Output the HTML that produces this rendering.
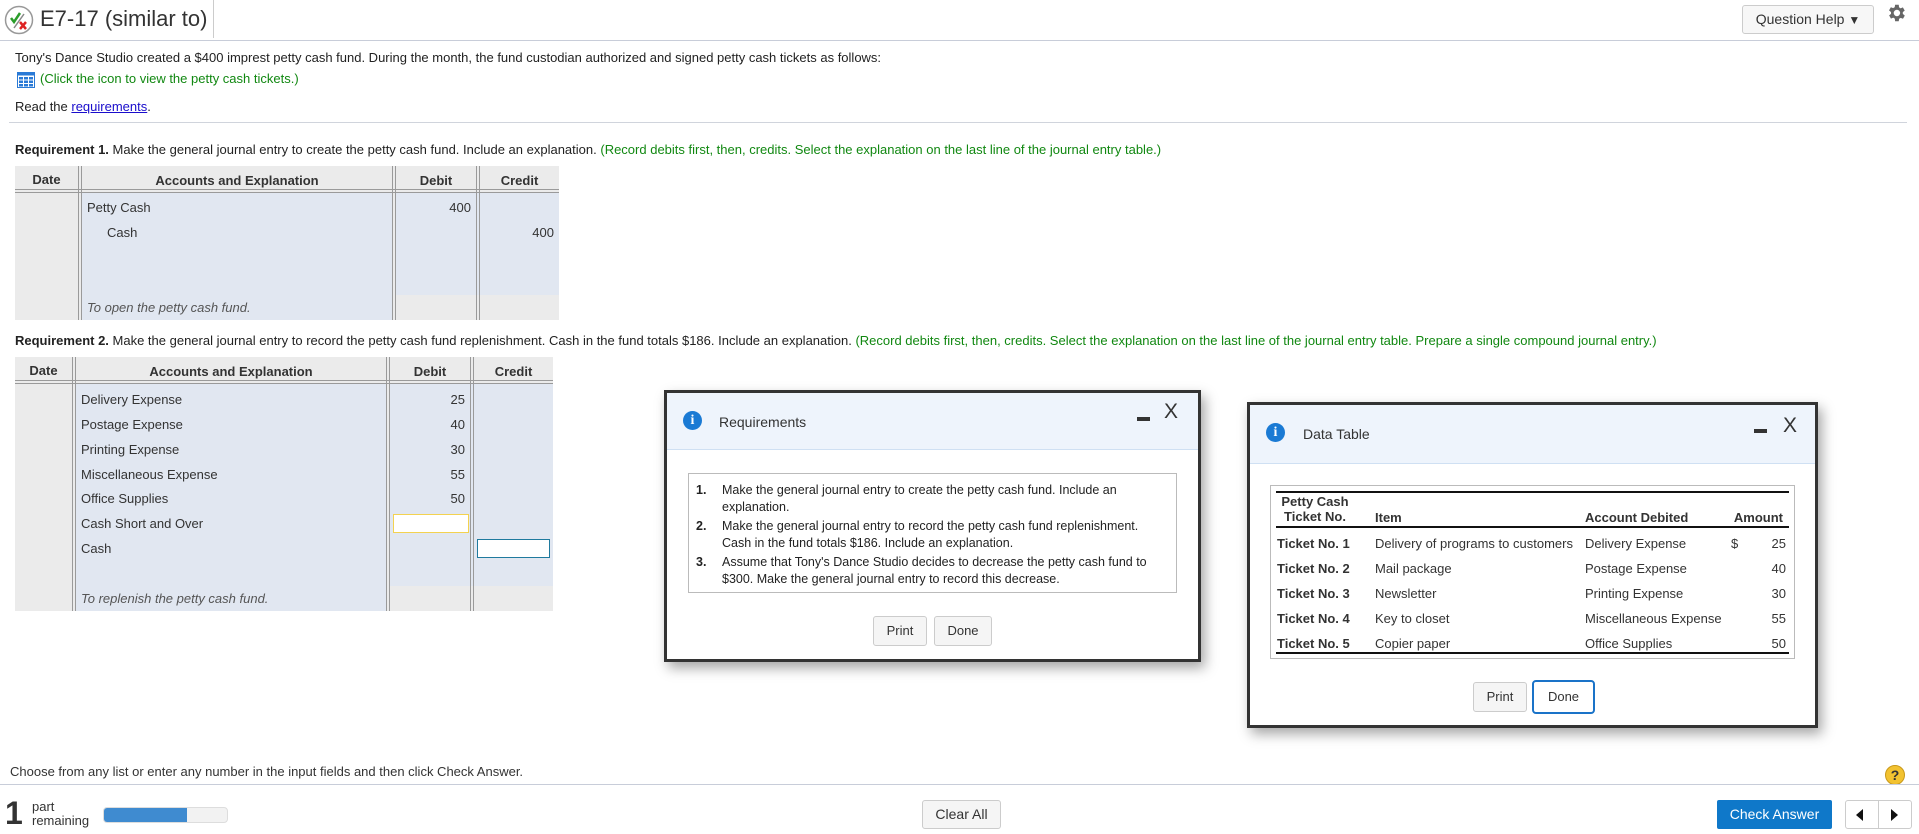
<!DOCTYPE html>
<html><head><meta charset="utf-8">
<style>
*{box-sizing:border-box;margin:0;padding:0}
body{width:1919px;height:834px;position:relative;background:#fff;font-family:"Liberation Sans",Arial,sans-serif;font-size:13px;color:#222;overflow:hidden}
.a{position:absolute;white-space:nowrap}
.g{color:#118811}
.hd{position:absolute;background:#ebebeb}
.vl{position:absolute;width:4px;border-left:1px solid #9a9a9a;border-right:1px solid #9a9a9a}
.hl{position:absolute;height:4px;border-top:1px solid #9a9a9a;border-bottom:1px solid #9a9a9a}
.th{position:absolute;font-weight:bold;color:#333;text-align:center;font-size:13px}
.td{position:absolute;color:#333;font-size:13px;white-space:nowrap}
.btn{position:absolute;border:1px solid #ccc;background:#f5f5f5;border-radius:3px;text-align:center;color:#333;font-size:13px}
.modal{position:absolute;background:#fff;border:3px solid #333;box-shadow:4px 6px 12px rgba(0,0,0,.35)}
.mh{position:absolute;left:0;top:0;right:0;background:#eef4fc;border-bottom:1px solid #cfe0f3}
.info{position:absolute;width:19px;height:19px;border-radius:50%;background:#1a7ad4;color:#fff;font:bold 14px "Liberation Serif",serif;text-align:center;line-height:19px}
</style></head><body>

<svg class="a" style="left:4px;top:5px" width="30" height="30" viewBox="0 0 30 30"><circle cx="15" cy="15" r="13.5" fill="#fff" stroke="#999" stroke-width="1.5"/><path d="M7 13l3 4 6-9" stroke="#2a9d2a" stroke-width="2.5" fill="none"/><path d="M10 23l10-14" stroke="#888" stroke-width="1.5"/><path d="M16 17l6 7M22 17l-6 7" stroke="#d22" stroke-width="2.5"/></svg>
<div class="a" style="left:40px;top:6px;font-size:22px;color:#333">E7-17 (similar to)</div>
<div class="a" style="left:213px;top:0;width:1px;height:38px;background:#ccc"></div>
<div class="a" style="left:0;top:40px;width:1919px;height:1px;background:#c8cdd9"></div>
<div class="btn" style="left:1742px;top:5px;width:132px;height:29px;line-height:27px;font-size:14px;background:#f7f7f7">Question Help <span style="font-size:12px">&#9660;</span></div>
<svg class="a" style="left:1885px;top:2px" width="22" height="22" viewBox="0 0 24 24"><path fill="#666" d="M19.4 13a7.5 7.5 0 000-2l2.1-1.6-2-3.5-2.5 1a7.6 7.6 0 00-1.700-1L15 3h-4l-.4 2.7a7.6 7.6 0 00-1.7 1l-2.5-1-2 3.5L6.6 11a7.5 7.5 0 000 2l-2.1 1.6 2 3.5 2.5-1a7.6 7.6 0 001.7 1L11 21h4l.4-2.7a7.6 7.6 0 001.7-1l2.5 1 2-3.5zM13 15.5a3.5 3.5 0 110-7 3.5 3.5 0 010 7z"/></svg>

<div class="a" style="left:15px;top:50px">Tony's Dance Studio created a $400 imprest petty cash fund. During the month, the fund custodian authorized and signed petty cash tickets as follows:</div>
<svg class="a" style="left:17px;top:72px" width="18" height="16" viewBox="0 0 18 16"><rect x="0.5" y="0.5" width="17" height="15" fill="#fff" stroke="#2a7ad6"/><rect x="0.5" y="0.5" width="17" height="3" fill="#2a7ad6"/><g fill="#2a7ad6"><rect x="2" y="5" width="4" height="2.5"/><rect x="7" y="5" width="4" height="2.5"/><rect x="12" y="5" width="4" height="2.5"/><rect x="2" y="8.5" width="4" height="2.5"/><rect x="7" y="8.5" width="4" height="2.5"/><rect x="12" y="8.5" width="4" height="2.5"/><rect x="2" y="12" width="4" height="2.5"/><rect x="7" y="12" width="4" height="2.5"/><rect x="12" y="12" width="4" height="2.5"/></g></svg>
<div class="a g" style="left:40px;top:71px">(Click the icon to view the petty cash tickets.)</div>
<div class="a" style="left:15px;top:99px">Read the <span style="color:#1a0dcc;text-decoration:underline">requirements</span>.</div>
<div class="a" style="left:9px;top:122px;width:1898px;height:1px;background:#d0d4dc"></div>

<div class="a" style="left:15px;top:142px"><b>Requirement 1.</b> Make the general journal entry to create the petty cash fund. Include an explanation. <span class="g">(Record debits first, then, credits. Select the explanation on the last line of the journal entry table.)</span></div>

<div class="hd" style="left:15px;top:166px;width:544px;height:154px"></div>
<div class="a" style="left:81px;top:193px;width:312px;height:127px;background:#e1e7f1"></div>
<div class="a" style="left:395px;top:193px;width:164px;height:102px;background:#e1e7f1"></div>
<div class="hl" style="left:15px;top:189px;width:544px"></div>
<div class="vl" style="left:78px;top:166px;height:154px"></div>
<div class="vl" style="left:392px;top:166px;height:154px"></div>
<div class="vl" style="left:476px;top:166px;height:154px"></div>
<div class="th" style="left:15px;top:172px;width:63px">Date</div>
<div class="th" style="left:82px;top:173px;width:310px">Accounts and Explanation</div>
<div class="th" style="left:396px;top:173px;width:80px">Debit</div>
<div class="th" style="left:480px;top:173px;width:79px">Credit</div>
<div class="td" style="left:87px;top:200px">Petty Cash</div>
<div class="td" style="left:107px;top:225px">Cash</div>
<div class="td" style="left:396px;top:200px;width:75px;text-align:right">400</div>
<div class="td" style="left:480px;top:225px;width:74px;text-align:right">400</div>
<div class="td" style="left:87px;top:300px;font-style:italic;color:#555">To open the petty cash fund.</div>

<div class="a" style="left:15px;top:333px"><b>Requirement 2.</b> Make the general journal entry to record the petty cash fund replenishment. Cash in the fund totals $186. Include an explanation. <span class="g">(Record debits first, then, credits. Select the explanation on the last line of the journal entry table. Prepare a single compound journal entry.)</span></div>

<div class="hd" style="left:15px;top:357px;width:538px;height:254px"></div>
<div class="a" style="left:75px;top:384px;width:312px;height:227px;background:#e1e7f1"></div>
<div class="a" style="left:389px;top:384px;width:164px;height:202px;background:#e1e7f1"></div>
<div class="hl" style="left:15px;top:380px;width:538px"></div>
<div class="vl" style="left:72px;top:357px;height:254px"></div>
<div class="vl" style="left:386px;top:357px;height:254px"></div>
<div class="vl" style="left:470px;top:357px;height:254px"></div>
<div class="th" style="left:15px;top:363px;width:57px">Date</div>
<div class="th" style="left:76px;top:364px;width:310px">Accounts and Explanation</div>
<div class="th" style="left:390px;top:364px;width:80px">Debit</div>
<div class="th" style="left:474px;top:364px;width:79px">Credit</div>
<div class="td" style="left:81px;top:392px">Delivery Expense</div>
<div class="td" style="left:81px;top:417px">Postage Expense</div>
<div class="td" style="left:81px;top:442px">Printing Expense</div>
<div class="td" style="left:81px;top:467px">Miscellaneous Expense</div>
<div class="td" style="left:81px;top:491px">Office Supplies</div>
<div class="td" style="left:81px;top:516px">Cash Short and Over</div>
<div class="td" style="left:81px;top:541px">Cash</div>
<div class="td" style="left:390px;top:392px;width:75px;text-align:right">25</div>
<div class="td" style="left:390px;top:417px;width:75px;text-align:right">40</div>
<div class="td" style="left:390px;top:442px;width:75px;text-align:right">30</div>
<div class="td" style="left:390px;top:467px;width:75px;text-align:right">55</div>
<div class="td" style="left:390px;top:491px;width:75px;text-align:right">50</div>
<div class="a" style="left:393px;top:514px;width:76px;height:19px;background:#fff;border:1px solid #f3d250"></div>
<div class="a" style="left:477px;top:539px;width:73px;height:19px;background:#fff;border:1px solid #1f7a9e"></div>
<div class="td" style="left:81px;top:591px;font-style:italic;color:#555">To replenish the petty cash fund.</div>

<div class="modal" style="left:664px;top:390px;width:537px;height:272px">
  <div class="mh" style="height:57px"></div>
  <div class="info" style="left:16px;top:18px">i</div>
  <div class="a" style="left:52px;top:21px;font-size:14px;color:#333">Requirements</div>
  <div class="a" style="left:470px;top:24px;width:13px;height:4px;background:#333"></div>
  <div class="a" style="left:497px;top:7px;font-size:21px;color:#333">X</div>
  <div class="a" style="left:21px;top:80px;width:489px;height:120px;border:1px solid #bbb"></div>
  <div class="a" style="left:29px;top:89px;line-height:16.5px;font-size:12.5px;color:#222">
    <div><b style="display:inline-block;width:26px">1.</b>Make the general journal entry to create the petty cash fund. Include an</div>
    <div style="padding-left:26px">explanation.</div>
    <div style="margin-top:3px"><b style="display:inline-block;width:26px">2.</b>Make the general journal entry to record the petty cash fund replenishment.</div>
    <div style="padding-left:26px">Cash in the fund totals $186. Include an explanation.</div>
    <div style="margin-top:3px"><b style="display:inline-block;width:26px">3.</b>Assume that Tony's Dance Studio decides to decrease the petty cash fund to</div>
    <div style="padding-left:26px">$300. Make the general journal entry to record this decrease.</div>
  </div>
  <div class="btn" style="left:206px;top:223px;width:54px;height:30px;line-height:28px">Print</div>
  <div class="btn" style="left:267px;top:223px;width:58px;height:30px;line-height:28px">Done</div>
</div>

<div class="modal" style="left:1247px;top:402px;width:571px;height:326px">
  <div class="mh" style="height:59px"></div>
  <div class="info" style="left:16px;top:18px">i</div>
  <div class="a" style="left:53px;top:21px;font-size:14px;color:#333">Data Table</div>
  <div class="a" style="left:504px;top:24px;width:13px;height:4px;background:#333"></div>
  <div class="a" style="left:533px;top:9px;font-size:21px;color:#333">X</div>
  <div class="a" style="left:20px;top:80px;width:525px;height:174px;border:1px solid #bbb"></div>
  <div class="a" style="left:26px;top:86px;width:513px;height:2px;background:#111"></div>
  <div class="a" style="left:26px;top:121px;width:513px;height:2px;background:#111"></div>
  <div class="a" style="left:26px;top:247px;width:513px;height:2px;background:#111"></div>
  <div class="td" style="left:30px;top:89px;width:70px;text-align:center;font-weight:bold;line-height:15px">Petty Cash<br>Ticket No.</div>
  <div class="td" style="left:125px;top:105px;font-weight:bold">Item</div>
  <div class="td" style="left:335px;top:105px;font-weight:bold">Account Debited</div>
  <div class="td" style="left:460px;top:105px;width:73px;text-align:right;font-weight:bold">Amount</div>
  <div class="td" style="left:27px;top:126px;font-weight:bold;line-height:25px">Ticket No. 1<br>Ticket No. 2<br>Ticket No. 3<br>Ticket No. 4<br>Ticket No. 5</div>
  <div class="td" style="left:125px;top:126px;line-height:25px">Delivery of programs to customers<br>Mail package<br>Newsletter<br>Key to closet<br>Copier paper</div>
  <div class="td" style="left:335px;top:126px;line-height:25px">Delivery Expense<br>Postage Expense<br>Printing Expense<br>Miscellaneous Expense<br>Office Supplies</div>
  <div class="td" style="left:481px;top:126px;line-height:25px">$</div>
  <div class="td" style="left:490px;top:126px;width:46px;text-align:right;line-height:25px">25<br>40<br>30<br>55<br>50</div>
  <div class="btn" style="left:223px;top:277px;width:54px;height:30px;line-height:28px">Print</div>
  <div class="btn" style="left:282px;top:275px;width:63px;height:34px;line-height:30px;border:2px solid #1a73c8;background:#fff;border-radius:4px">Done</div>
</div>

<div class="a" style="left:10px;top:764px;color:#333">Choose from any list or enter any number in the input fields and then click Check Answer.</div>
<div class="a" style="left:1885px;top:765px;width:20px;height:20px;border-radius:50%;background:#f2c230;border:1px solid #c9991a;text-align:center;font:bold 14px/18px 'Liberation Sans',sans-serif;color:#333">?</div>
<div class="a" style="left:0;top:784px;width:1919px;height:1px;background:#c8cdd9"></div>
<div class="a" style="left:5px;top:796px;font-size:32px;font-weight:bold;color:#333;line-height:34px">1</div>
<div class="a" style="left:32px;top:800px;font-size:13px;line-height:14px;color:#333">part<br>remaining</div>
<div class="a" style="left:103px;top:807px;width:125px;height:16px;border-radius:4px;background:#f2f2f2;border:1px solid #ddd;overflow:hidden"><div style="width:83px;height:100%;background:#3f8bd0"></div></div>
<div class="btn" style="left:922px;top:800px;width:79px;height:29px;line-height:27px;font-size:14px">Clear All</div>
<div class="a" style="left:1717px;top:800px;width:115px;height:29px;background:#0f78c9;color:#fff;text-align:center;line-height:29px;font-size:14px;border-radius:2px">Check Answer</div>
<div class="btn" style="left:1845px;top:800px;width:67px;height:29px;background:#fff"></div>
<div class="a" style="left:1878px;top:801px;width:1px;height:27px;background:#ccc"></div>
<div class="a" style="left:1856px;top:809px;width:0;height:0;border-top:6px solid transparent;border-bottom:6px solid transparent;border-right:7px solid #111"></div>
<div class="a" style="left:1891px;top:809px;width:0;height:0;border-top:6px solid transparent;border-bottom:6px solid transparent;border-left:7px solid #111"></div>
</body></html>
